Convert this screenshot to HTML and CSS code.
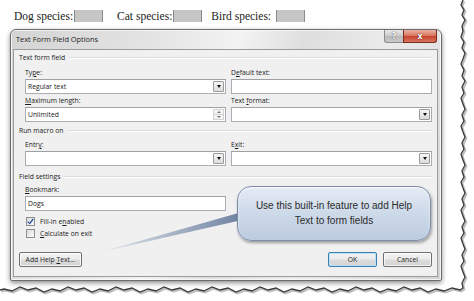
FILE: index.html
```html
<!DOCTYPE html>
<html>
<head>
<meta charset="utf-8">
<link rel="stylesheet" href="styles.css">
</head>
<body>
<div class="page">
  <div class="doc-line">
    <span class="doc-label">Dog species:</span><span class="form-field"></span>
    <span class="doc-label cat">Cat species:</span><span class="form-field"></span>
    <span class="doc-label bird">Bird species:</span><span class="form-field spaced"></span>
  </div>

  <div class="dialog">
    <div class="titlebar">
      <span class="title">Text Form Field Options</span>
      <div class="caption-btns">
        <span class="cap-help">?</span>
        <span class="cap-close">x</span>
      </div>
    </div>
    <div class="client">
      <div class="section">Text form field</div>
      <div class="grid first">
        <div class="fb">
          <div class="lbl">Ty<u>p</u>e:</div>
          <div class="field"><span class="val">Regular text</span><span class="drop"></span></div>
        </div>
        <div class="fb">
          <div class="lbl">D<u>e</u>fault text:</div>
          <div class="field"></div>
        </div>
        <div class="fb">
          <div class="lbl"><u>M</u>aximum length:</div>
          <div class="field"><span class="val">Unlimited</span><span class="spin"><span class="up"></span><span class="down"></span></span></div>
        </div>
        <div class="fb">
          <div class="lbl">Text <u>f</u>ormat:</div>
          <div class="field"><span class="drop"></span></div>
        </div>
      </div>

      <div class="section mid">Run macro on</div>
      <div class="grid second">
        <div class="fb">
          <div class="lbl">Entr<u>y</u>:</div>
          <div class="field"><span class="drop"></span></div>
        </div>
        <div class="fb">
          <div class="lbl">E<u>x</u>it:</div>
          <div class="field"><span class="drop"></span></div>
        </div>
      </div>

      <div class="section settings">Field settings</div>
      <div class="grid third">
        <div class="fb">
          <div class="lbl"><u>B</u>ookmark:</div>
          <div class="field"><span class="val">Dogs</span></div>
        </div>
      </div>

      <div class="check first-check">
        <span class="box checked"><svg width="7" height="7" viewBox="0 0 7 7"><path d="M0.8 3.6 L2.7 5.6 L6.2 1" fill="none" stroke="#2c4fa0" stroke-width="1.3"/></svg></span>
        <span>Fill-in e<u>n</u>abled</span>
      </div>
      <div class="check">
        <span class="box"></span>
        <span><u>C</u>alculate on exit</span>
      </div>

      <div class="btn-row">
        <span class="btn help-btn"><span>Add Help <u>T</u>ext...</span></span>
        <span class="btn ok-btn">OK</span>
        <span class="btn cancel-btn">Cancel</span>
      </div>
    </div>
  </div>

  <svg class="overlay" width="474" height="301" viewBox="0 0 474 301">
    <defs>
      <linearGradient id="pg" x1="101" y1="252" x2="241" y2="216" gradientUnits="userSpaceOnUse">
        <stop offset="0" stop-color="#e2e6ec"/>
        <stop offset="0.5" stop-color="#a9b6c8"/>
        <stop offset="1" stop-color="#6f82a2"/>
      </linearGradient>
    </defs>
    <polygon points="101,252 242,212 242,220" fill="url(#pg)"/>
    <polyline fill="none" stroke="#bdbdbd" stroke-width="2.2" transform="translate(1.2,1.4)"
      points="463,0 461,5 464,10 462,15 465,20 462,26 463,31 461,37 464,42 462,48 465,53 463,59 461,64 464,70 462,76 465,81 462,87 464,93 461,98 463,104 465,109 462,115 464,121 461,126 463,132 465,137 462,143 464,149 461,154 463,160 465,165 462,171 464,177 461,182 463,188 465,193 462,199 464,205 461,210 463,216 465,221 462,227 464,233 461,238 463,244 465,249 462,255 464,261 461,266 463,272 465,277 462,283 463,288 460,290 452,288 444,291 436,289 428,292 420,288 412,290 404,287 396,291 388,289 380,292 372,288 364,290 356,287 348,291 340,289 332,292 324,288 316,290 308,287 300,291 292,289 284,292 276,288 268,290 260,287 252,291 244,289 236,292 228,288 220,290 212,287 204,291 196,289 188,292 180,288 172,290 164,287 156,291 148,289 140,292 132,288 124,290 116,287 108,291 100,289 92,292 84,288 76,290 68,287 60,291 52,289 44,292 36,288 28,290 20,287 12,291 4,289 0,290"/>
    <polyline fill="none" stroke="#3a3a3a" stroke-width="1.3"
      points="463,0 461,5 464,10 462,15 465,20 462,26 463,31 461,37 464,42 462,48 465,53 463,59 461,64 464,70 462,76 465,81 462,87 464,93 461,98 463,104 465,109 462,115 464,121 461,126 463,132 465,137 462,143 464,149 461,154 463,160 465,165 462,171 464,177 461,182 463,188 465,193 462,199 464,205 461,210 463,216 465,221 462,227 464,233 461,238 463,244 465,249 462,255 464,261 461,266 463,272 465,277 462,283 463,288 460,290 452,288 444,291 436,289 428,292 420,288 412,290 404,287 396,291 388,289 380,292 372,288 364,290 356,287 348,291 340,289 332,292 324,288 316,290 308,287 300,291 292,289 284,292 276,288 268,290 260,287 252,291 244,289 236,292 228,288 220,290 212,287 204,291 196,289 188,292 180,288 172,290 164,287 156,291 148,289 140,292 132,288 124,290 116,287 108,291 100,289 92,292 84,288 76,290 68,287 60,291 52,289 44,292 36,288 28,290 20,287 12,291 4,289 0,290"/>
  </svg>

  <div class="callout">Use this built-in feature to add Help<br>Text to form fields</div>
</div>
</body>
</html>
```

FILE: styles.css
```css
html, body {
  margin: 0;
  padding: 0;
  background: #ffffff;
}

.page {
  position: relative;
  width: 474px;
  height: 301px;
  overflow: hidden;
  background: #ffffff;
}

/* document line */
.doc-line {
  display: flex;
  align-items: center;
  height: 16px;
  padding-top: 8px;
  padding-left: 14px;
  font-family: "Liberation Serif", "Times New Roman", serif;
  font-size: 11.5px;
  color: #222;
  white-space: nowrap;
}

.form-field {
  display: block;
  width: 29px;
  height: 12px;
  margin-left: 1px;
  box-sizing: border-box;
  background: #c6c6c6;
  border-left: 1px solid #8a8a8a;
  border-right: 1px solid #8a8a8a;
}

.form-field.spaced { margin-left: 5px; }
.doc-label.cat { margin-left: 14px; }
.doc-label.bird { margin-left: 9px; }

/* dialog */
.dialog {
  position: relative;
  margin: 5px 0 0 10px;
  width: 432px;
  height: 252px;
  box-sizing: border-box;
  border: 1px solid #6c6c6c;
  border-radius: 6px 6px 2px 2px;
  padding: 0 3px 3px 2px;
  display: flex;
  flex-direction: column;
  background: linear-gradient(112deg, #d4d4d4 0%, #e4e4e4 28%, #f3f3f3 44%, #dedede 56%, #ebebeb 72%, #d3d3d3 100%);
  box-shadow: 0 2px 5px rgba(0, 0, 0, 0.45), inset 0 0 0 1px rgba(255, 255, 255, 0.7);
  font-family: "Open Sans", "Noto Sans", sans-serif;
  color: #1a1a1a;
}

.titlebar {
  height: 19px;
  display: flex;
  align-items: flex-start;
}

.title {
  font-size: 7.4px;
  line-height: 19px;
  padding-left: 3px;
  color: #1c1c1c;
}

.caption-btns {
  margin-left: auto;
  margin-right: 1px;
  display: flex;
}

.cap-help, .cap-close {
  display: flex;
  align-items: center;
  justify-content: center;
  height: 13px;
  box-sizing: border-box;
  font-family: "DejaVu Sans", sans-serif;
  font-weight: bold;
  color: #ffffff;
}

.cap-help {
  width: 19px;
  border: 1px solid #8c8c8c;
  border-top: none;
  border-right: none;
  border-radius: 0 0 0 3px;
  background: linear-gradient(#e6e6e6 0%, #cdcdcd 48%, #b8b8b8 52%, #cacaca 100%);
  font-size: 8px;
  text-shadow: 0 0 1px #555, 0 0 1px #555;
}

.cap-close {
  width: 34px;
  border: 1px solid #7c2a1e;
  border-top: none;
  border-radius: 0 0 3px 0;
  background: linear-gradient(#eab0a3 0%, #d9755f 48%, #c7432c 52%, #d77560 100%);
  font-size: 8px;
  text-shadow: 0 0 1px #5a1208, 0 0 1px #5a1208;
}

.client {
  flex: 1;
  border: 1px solid #9b9b9b;
  background: #f0f0f0;
  padding: 3px 5px 9px 5px;
  display: flex;
  flex-direction: column;
  font-size: 6.8px;
}

.section {
  height: 10px;
  line-height: 10px;
  display: flex;
  align-items: center;
  gap: 4px;
  color: #1a1a1a;
}

.section::after {
  content: "";
  flex: 1;
  height: 0;
  border-top: 1px solid #d9dde2;
  border-bottom: 1px solid #ffffff;
}

.section.mid { margin-top: 4px; }
.section.settings { margin-top: 6px; }

.grid {
  display: grid;
  grid-template-columns: 201px 201px;
  column-gap: 5px;
  row-gap: 2px;
  padding-left: 6px;
}

.grid.first { margin-top: 5px; }
.grid.second { margin-top: 4px; }
.grid.third { margin-top: 3px; }

.lbl {
  height: 10px;
  line-height: 10px;
  color: #1a1a1a;
}

.field {
  margin-top: 1px;
  height: 15px;
  box-sizing: border-box;
  border: 1px solid #abadb3;
  border-top-color: #9ea0a6;
  background: #ffffff;
  display: flex;
  align-items: center;
  padding-left: 2px;
}

.val {
  color: #1a1a1a;
}

.drop {
  margin-left: auto;
  margin-right: 1px;
  width: 11px;
  height: 11px;
  box-sizing: border-box;
  border: 1px solid #9a9a9a;
  border-radius: 1px;
  background: linear-gradient(#f6f6f6, #dcdcdc);
  display: flex;
  align-items: center;
  justify-content: center;
}

.drop::after {
  content: "";
  width: 0;
  height: 0;
  border-top: 3px solid #111;
  border-left: 2.5px solid transparent;
  border-right: 2.5px solid transparent;
}

.spin {
  margin-left: auto;
  margin-right: 1px;
  width: 11px;
  height: 11px;
  display: flex;
  flex-direction: column;
}

.spin .up, .spin .down {
  flex: 1;
  display: flex;
  align-items: center;
  justify-content: center;
  border: 1px solid #d2d2d2;
  background: #f4f4f4;
}

.spin .down { border-top: none; }

.spin .up::after {
  content: "";
  border-bottom: 2px solid #777;
  border-left: 2px solid transparent;
  border-right: 2px solid transparent;
}

.spin .down::after {
  content: "";
  border-top: 2px solid #777;
  border-left: 2px solid transparent;
  border-right: 2px solid transparent;
}

.check {
  height: 10px;
  margin-top: 2px;
  padding-left: 7px;
  display: flex;
  align-items: center;
  gap: 5px;
}

.check.first-check { margin-top: 5px; }

.box {
  width: 9px;
  height: 9px;
  box-sizing: border-box;
  border: 1px solid #8e8f8f;
  background: linear-gradient(135deg, #dcdcdc, #fbfbfb);
  display: flex;
  align-items: center;
  justify-content: center;
}

.box svg { display: block; }

.btn-row {
  margin-top: auto;
  display: flex;
  gap: 6px;
}

.btn {
  height: 15px;
  box-sizing: border-box;
  border: 1px solid #707070;
  border-radius: 2px;
  background: linear-gradient(#f3f3f3 0%, #ebebeb 48%, #dddddd 52%, #d2d2d2 100%);
  box-shadow: inset 0 0 0 1px rgba(255, 255, 255, 0.75);
  display: flex;
  align-items: center;
  justify-content: center;
  color: #1e1e1e;
  white-space: pre;
}

.help-btn { width: 63px; }
.ok-btn {
  width: 49px;
  margin-left: auto;
  border-color: #3c7fb1;
  box-shadow: inset 0 0 0 1px #b9e1f7;
}
.cancel-btn { width: 49px; }

/* overlay: callout pointer and torn paper edge */
.overlay {
  position: absolute;
  left: 0;
  top: 0;
  pointer-events: none;
}

.callout {
  position: absolute;
  left: 237px;
  top: 186px;
  width: 194px;
  height: 55px;
  box-sizing: border-box;
  border: 1.5px solid #7d8eab;
  border-radius: 14px;
  background: linear-gradient(#e4ebf5 0%, #cfdbea 45%, #bccbdf 100%);
  box-shadow: 1px 2px 3px rgba(0, 0, 0, 0.35), inset 0 1px 2px rgba(255, 255, 255, 0.9);
  display: flex;
  align-items: center;
  justify-content: center;
  text-align: center;
  font-family: "Liberation Sans", Arial, sans-serif;
  font-size: 10px;
  line-height: 15px;
  color: #2b2b2b;
  padding-bottom: 2px;
}
```
